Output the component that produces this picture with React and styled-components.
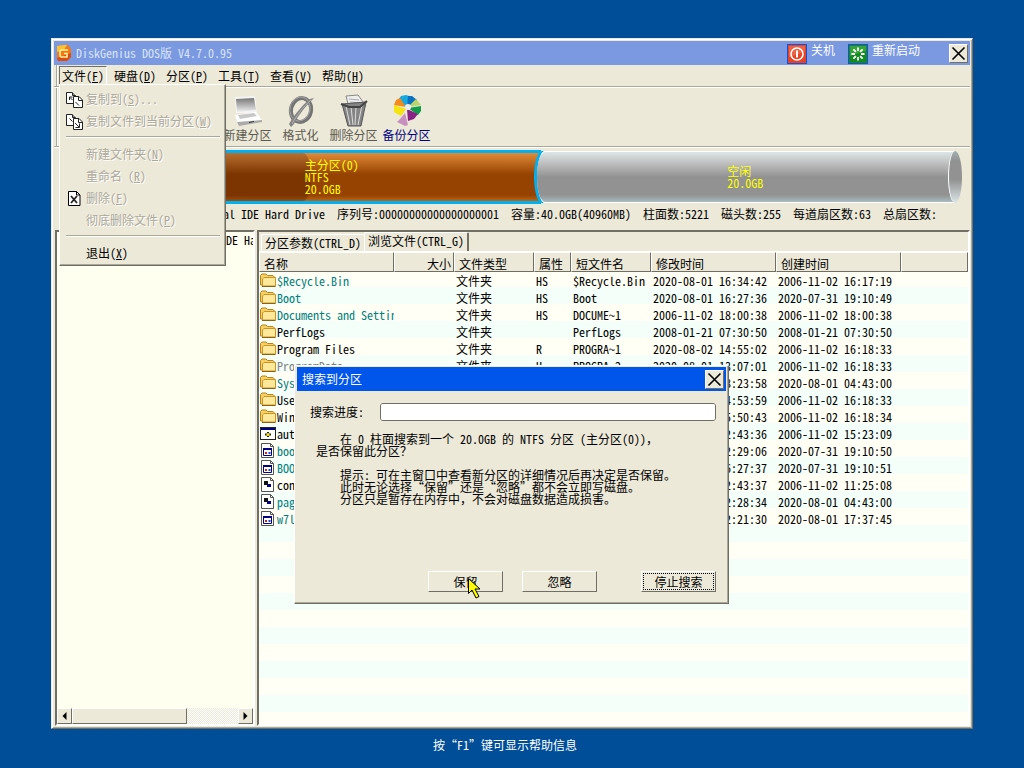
import { Fragment } from "react";
import styled, { createGlobalStyle, css } from "styled-components";

const GlobalStyle = createGlobalStyle`
  * {
    box-sizing: border-box;
  }

  body {
    margin: 0;
    background: #004e98;
    color: #000;
    font-family: "Noto Sans Mono CJK SC", "Noto Sans CJK SC", monospace;
    font-size: 12px;
    line-height: 16px;
  }

  button {
    margin: 0;
    padding: 0;
    border: 0;
    background: none;
    color: inherit;
    font: inherit;
    white-space: nowrap;
  }
`;

const raised = css`
  background: #ece9d8;
  border: 1px solid;
  border-color: #fff #716f64 #716f64 #fff;
`;

const sunken = css`
  border: 2px solid;
  border-color: #716f64 #fff #fff #716f64;
`;

const Desktop = styled.main`
  position: relative;
  display: flex;
  flex-direction: column;
  min-height: 100vh;
  padding: 38px 51px 0;
`;

const MainWindow = styled.section`
  display: flex;
  flex: 1;
  flex-direction: column;
  background: #ece9d8;
  border: 1px solid;
  border-color: #ece9d8 #716f64 #716f64 #ece9d8;
  box-shadow: inset 1px 1px #fff, inset -1px -1px #aca899;
  padding: 2px;
`;

const TitleBar = styled.header`
  display: flex;
  align-items: center;
  height: 24px;
  padding: 0 2px 0 2px;
  background: #7b99e1;
`;

const Title = styled.h1`
  flex: 1;
  margin: 0 0 0 4px;
  color: #d8e4f8;
  font-size: 12px;
  font-weight: normal;
`;

const PowerButton = styled.button`
  display: flex;
  gap: 4px;
  margin-right: 13px;
  color: #fff;

  & + & {
    margin-right: 29px;
  }

  svg {
    margin-top: 2px;
  }
`;

const CloseButton = styled.button`
  ${raised}
  display: flex;
  align-items: center;
  justify-content: center;
  width: 19px;
  height: 19px;
`;

const Band = styled.div`
  display: flex;
  height: ${(p) => p.$height}px;
  margin-left: 2px;
  border-left: 1px solid #aca899;
  box-shadow: inset 1px 0 #fff;
  padding-left: ${(p) => p.$indent}px;
`;

const Rule = styled.hr`
  width: 100%;
  margin: 0;
  border: 0;
  border-top: 1px solid #aca899;
  border-bottom: 1px solid #fff;
`;

const MenuSlot = styled.div`
  position: relative;
  width: 52px;
`;

const MenuButton = styled.button`
  width: 48px;
  height: 19px;
  margin-top: 1px;
  border: 1px solid transparent;
  ${(p) =>
    p.$open &&
    css`
      border-color: #716f64 #fff transparent #716f64;
    `}
`;

const Dropdown = styled.div`
  ${raised}
  position: absolute;
  z-index: 2;
  top: 19px;
  left: 0;
  width: 167px;
  padding: 3px 5px 1px 6px;
  box-shadow: inset -1px -1px #aca899;
`;

const DropItem = styled.button`
  display: flex;
  align-items: center;
  width: 100%;
  height: 22px;
  text-align: left;

  &:disabled {
    color: #aca899;
    text-shadow: 1px 1px #fff;
  }
`;

const IconCell = styled.span`
  display: flex;
  width: 20px;
`;

const DropRule = styled(Rule)`
  margin: 4px 0 5px;
`;

const ToolButton = styled.button`
  display: flex;
  flex-direction: column;
  align-items: center;
  width: 53px;
  padding-top: 4px;
  color: ${(p) => (p.$active ? "#000080" : "#5c5a50")};

  svg {
    margin-bottom: -1px;
  }
`;

const DiskMap = styled.div`
  position: relative;
  display: flex;
  margin: 2px 8px 0 66px;
  height: 54px;
`;

const Partition = styled.div`
  position: relative;
  display: flex;
  flex: 1;
  flex-direction: column;
  align-items: center;
  justify-content: center;
  color: #ff0;
  line-height: 12px;
`;

const UsedPartition = styled(Partition)`
  border: 3px solid #00b0f0;
  border-right: 0;
  background: linear-gradient(#e08a38, #964200 45%, #964200 88%, #b86818);
`;

const UsedSpace = styled.div`
  position: absolute;
  inset: 0 auto 0 0;
  width: 45%;
  border-radius: 0 8px 8px 0 / 0 24px 24px 0;
  background: linear-gradient(#b87030, #7c3400 45%, #7c3400 88%, #945010);
`;

const FreePartition = styled(Partition)`
  height: 52px;
  margin: 1px 8px 0 -4px;
  border: solid #fff;
  border-width: 1px 0;
  border-radius: 8px 0 0 8px / 26px 0 0 26px;
  box-shadow: -3px 0 #00b0f0;
  background: linear-gradient(#dce6e8, #c0c0c0 22%, #929292 50%, #929292 86%, #a8bcc0);
`;

const DiskCap = styled.div`
  position: absolute;
  top: 1px;
  right: 0;
  width: 14px;
  height: 52px;
  border-left: 1px solid #fff;
  border-radius: 50%;
  background: linear-gradient(#a0b0b0, #929292 20%, #929292 55%, #dce6e8);
`;

const PartitionText = styled.div`
  position: relative;
  white-space: pre;
`;

const DiskInfo = styled.div`
  display: flex;
  gap: 12px;
  height: 26px;
  padding: 2px 0 0 139px;
  overflow: hidden;
  white-space: nowrap;
`;

const Panels = styled.div`
  display: flex;
  flex: 1;
  gap: 3px;
  padding: 0 0 0 1px;
`;

const Tree = styled.aside`
  ${sunken}
  display: flex;
  flex: 0 0 200px;
  flex-direction: column;
  justify-content: space-between;
  overflow: hidden;
  background: #fffff0;
`;

const TreeRoot = styled.div`
  padding-left: 91px;
  overflow: hidden;
  white-space: nowrap;
`;

const Scrollbar = styled.div`
  display: flex;
  height: 16px;
  background: repeating-conic-gradient(#fff 0 25%, #ece9d8 0 50%) 0 0 / 2px 2px;
`;

const ScrollButton = styled.button`
  ${raised}
  display: flex;
  flex: 0 0 15px;
  align-items: center;
  justify-content: center;
`;

const Thumb = styled.div`
  ${raised}
  width: 115px;
  margin-right: auto;
`;

const Browser = styled.section`
  ${sunken}
  display: flex;
  flex: 1;
  flex-direction: column;
  min-width: 0;
  margin-left: -1px;
  background: #ece9d8;
`;

const Tabs = styled.div`
  display: flex;
  align-items: flex-end;
  height: 20px;
  padding-left: 2px;
  border-bottom: 1px solid #fff;
`;

const Tab = styled.button`
  height: ${(p) => (p.$active ? 19 : 17)}px;
  padding: 0 3px;
  border: solid;
  border-width: 1px 0 0 1px;
  border-color: #fff;
  border-radius: 2px 2px 0 0;
  ${(p) =>
    p.$active &&
    css`
      padding-bottom: 2px;
      border-right: 2px solid #716f64;
    `}
`;

const FileArea = styled.div`
  flex: 1;
  background: repeating-linear-gradient(
    #fffff5 0 17px,
    #f3fff8 17px 34px
  ) 0 18px;
`;

const FileTable = styled.table`
  width: 100%;
  border-collapse: separate;
  border-spacing: 0;
  table-layout: fixed;

  th {
    ${raised}
    height: 20px;
    padding: 2px 4px 0;
    font-weight: normal;
    line-height: 15px;
    text-align: left;
  }

  td {
    height: 17px;
    padding: 0 0 0 2px;
    overflow: hidden;
    line-height: 17px;
    white-space: nowrap;
  }
`;

const SizeHead = styled.th`
  && {
    padding-right: 2px;
    text-align: right;
  }
`;

const FileName = styled.div`
  display: flex;
  height: 17px;
  align-items: center;
  color: ${(p) => p.$color};

  svg {
    flex: none;
    margin: 0 1px 0 -1px;
  }
`;

const Dialog = styled.section`
  ${raised}
  position: absolute;
  z-index: 3;
  top: 365px;
  left: 294px;
  width: 435px;
  height: 239px;
  padding: 1px 2px 2px;
  box-shadow: inset -1px -1px #aca899;
`;

const DialogTitle = styled.header`
  display: flex;
  align-items: center;
  justify-content: space-between;
  height: 24px;
  padding: 0 2px 0 5px;
  background: #0055ea;
  color: #fff;
`;

const DialogBody = styled.div`
  padding: 12px 10px 0 13px;
`;

const ProgressLine = styled.label`
  display: flex;
  align-items: center;
  gap: 16px;
`;

const Progress = styled.progress`
  appearance: none;
  flex: 1;
  height: 18px;
  border: 1px solid #716f64;
  border-radius: 3px;
  background: #fff;
  overflow: hidden;

  &::-webkit-progress-bar {
    background: #fff;
  }

  &::-webkit-progress-value {
    background: #316ac5;
  }
`;

const Message = styled.div`
  height: 150px;
  padding: 12px 0 0 6px;
  line-height: 12px;
  white-space: pre;
`;

const DialogButtons = styled.div`
  display: flex;
  justify-content: flex-end;
  gap: 19px;
`;

const DialogButton = styled.button`
  ${raised}
  width: 75px;
  height: 21px;
  line-height: 17px;

  &:last-child {
    margin-left: 25px;
    outline: 1px dotted #000;
    outline-offset: -3px;
  }
`;

const Hint = styled.footer`
  height: 39px;
  padding: 8px 14px 0 0;
  text-align: center;
  color: #fff;
`;

const Pointer = styled.svg`
  position: absolute;
  z-index: 4;
  top: 577px;
  left: 467px;
`;

const CloseIcon = () => (
  <svg width="15" height="15" viewBox="0 0 15 15">
    <path d="M1.5 1.5l12 12M13.5 1.5l-12 12" stroke="#000" strokeWidth="1.6" />
  </svg>
);

const AppIcon = () => (
  <svg width="16" height="18" viewBox="0 0 16 18">
    <path d="M1 2L8 1h4l3 4v8l-4 4H2l-1-3z" fill="#f47a12" />
    <path d="M1 2L8 1h3L8 6 1 8z" fill="#ffc02c" />
    <path d="M1 14l1 3h9l4-4V9z" fill="#dc4b10" />
    <path d="M12 6H5L4 7v5l1 1h6V9.500H8" fill="none" stroke="#fff3a0" strokeWidth="1.600" />
  </svg>
);

const ShutdownIcon = () => (
  <svg width="20" height="20" viewBox="0 0 20 20">
    <rect x=".5" y=".5" width="19" height="19" fill="#e84224" stroke="#1450d8" />
    <path d="M2 2h16v6L2 13z" fill="#f0765c" opacity=".6" />
    <circle cx="10" cy="10" r="6" fill="none" stroke="#fff" strokeWidth="1.600" />
    <path d="M10 6.500v7" stroke="#fff" strokeWidth="2" />
  </svg>
);

const RestartIcon = () => (
  <svg width="20" height="20" viewBox="0 0 20 20">
    <rect x=".5" y=".5" width="19" height="19" fill="#128a20" stroke="#1450d8" />
    <path d="M2 2h16v5L2 12z" fill="#4cb44c" opacity=".6" />
    <path
      d="M10 3.500v3.500M10 13v3.500M3.500 10H7M13 10h3.500M5.400 5.400l2.500 2.500M12.100 12.100l2.500 2.500M5.400 14.600l2.500-2.500M12.100 7.900l2.500-2.500"
      stroke="#fff"
      strokeWidth="1.800"
    />
  </svg>
);

const CopyIcon = ({ into }) => (
  <svg width="17" height="17" viewBox="0 0 17 17">
    <path d="M.5 1.500H6L9.500 5v7.500h-9z" fill="#fff" stroke="#222" />
    <path d="M6.500 1.500v3h3" fill="none" stroke="#222" />
    <path d="M7.500 5.500H13L16.500 9v7.500h-9z" fill="#fff" stroke="#222" />
    <path d="M12.500 5.500v4h4" fill="none" stroke="#222" />
    {into ? (
      <path d="M3.500 5.500l3 3M9 10l4 4M13.500 10.500v4h-4" fill="none" stroke="#222" />
    ) : (
      <path d="M3.500 9V6h3M4 6.500l2.500 2.500M9.500 11l3.500 3.500" fill="none" stroke="#222" />
    )}
  </svg>
);

const DeleteIcon = () => (
  <svg width="17" height="17" viewBox="0 0 17 17">
    <path d="M2.500 1.500h8l3.500 3.500v10.500H2.500z" fill="#fff" stroke="#000" />
    <path d="M10.500 1.500V5H14" fill="none" stroke="#000" />
    <path d="M5 6l6 7M11 6l-6 7" stroke="#222" strokeWidth="1.800" />
  </svg>
);

const LaptopIcon = () => (
  <svg width="34" height="36" viewBox="0 0 34 36">
    <defs>
      <linearGradient id="screen" x2="0" y2="1">
        <stop offset="0" stopColor="#777" />
        <stop offset="1" stopColor="#eee" />
      </linearGradient>
    </defs>
    <path d="M4 5l20-1 2 17H5z" fill="#f4f4f4" />
    <path d="M5 7l18-1 2 12-19 2z" fill="url(#screen)" />
    <path d="M4 23l21-3 6 8-24 4z" fill="#fff" />
    <path d="M7 23l16-2 3 3-17 3z" fill="#c8c8c8" />
    <path d="M6 30l25-2v2L8 34z" fill="#aaa" />
    <path d="M18 30l5-1v1l-5 1z" fill="#333" />
  </svg>
);

const FormatIcon = () => (
  <svg width="34" height="36" viewBox="0 0 34 36">
    <ellipse cx="17" cy="18" rx="10" ry="12" fill="none" stroke="#757575" strokeWidth="4" transform="rotate(14 17 18)" />
    <ellipse cx="16" cy="17" rx="10" ry="12" fill="none" stroke="#a4a4a4" transform="rotate(14 16 17)" />
    <path d="M30 6l-4 1C18 13 9 25 5 32l2 3 3-3C13 25 21 15 27 9z" fill="#828282" />
    <path d="M27 8C19 15 12 24 8 32" fill="none" stroke="#b4b4b4" />
  </svg>
);

const TrashIcon = () => (
  <svg width="34" height="36" viewBox="0 0 34 36">
    <path d="M9 4l12-1 8 11-16 5z" fill="#eee" stroke="#888" />
    <path d="M12 7l10 1M13 10l12 1" stroke="#aaa" />
    <path d="M5 12l24-2-5 24H11z" fill="#858585" stroke="#555" />
    <path d="M9 14l4 19M14 15l2 18M19 15l-1 18M25 13l-4 20" stroke="#ddd" />
    <path d="M4 12l8 3h11l7-6" fill="none" stroke="#444" strokeWidth="2" />
  </svg>
);

const WheelIcon = () => (
  <svg width="34" height="36" viewBox="0 0 34 36">
    <path d="M17 16L8 8l3-4 5-1 3 1z" fill="#18a8e0" />
    <path d="M17 16l1-12h4l5 4z" fill="#0c70c0" />
    <path d="M18 15l8-8 5 6z" fill="#b8d46c" />
    <path d="M18 16l13-2v5l-3 4z" fill="#109c48" />
    <path d="M17 17l11 5-4 5-6 2z" fill="#8a2484" />
    <path d="M15 21l-5 6-3 3 8 4 3-1z" fill="#c890c0" />
    <path d="M16 17l-5 7-7-4v-7z" fill="#f4e410" />
    <path d="M16 15L4 13l2-5 4-2z" fill="#f48a1c" />
    <circle cx="18" cy="15" r="3" fill="#eee" />
  </svg>
);

const FolderIcon = () => (
  <svg width="16" height="15" viewBox="0 0 16 15">
    <path d="M.5 12V2.500L2 1h4l1.500 1.500H13L14.500 4v8z" fill="#f8d060" stroke="#b8841c" />
    <path d="M2.500 13V6L4 4.500h11.500V13z" fill="#fde89c" stroke="#c8942c" />
    <path d="M2 13.500h13.500" stroke="#8c6410" />
  </svg>
);

const FileIcon = ({ kind }) => {
  if (kind === "folder") {
    return <FolderIcon />;
  }
  if (kind === "batch") {
    return (
      <svg width="16" height="15" viewBox="0 0 16 15">
        <rect x=".5" y="1.500" width="15" height="12" fill="#fff" stroke="#222" />
        <path d="M1 3h14" stroke="#000080" strokeWidth="2" />
        <path d="M8 6v5M5 8.500h6" stroke="#222" strokeWidth="2" />
        <circle cx="8" cy="8.500" r="1.500" fill="#ffe800" />
      </svg>
    );
  }
  return (
    <svg width="16" height="15" viewBox="0 0 16 15">
      <path d="M1.500 .5h9L13.500 3.500v11h-12z" fill="#fff" stroke="#555" />
      <path d="M10.500 .5v3h3" fill="none" stroke="#555" />
      {kind === "data" ? (
        <>
          <path d="M3.500 5.500h8v7h-8z" fill="#fff" stroke="#000080" />
          <path d="M3 6h9" stroke="#000080" strokeWidth="2" />
          <path d="M5 10h2" stroke="#d02020" strokeWidth="2" />
          <path d="M8.500 10h2" stroke="#2040d0" strokeWidth="2" />
        </>
      ) : (
        <>
          <path d="M4 4h4v4H4z" fill="#111" />
          <path d="M7 7h4v3H7z" fill="#000080" />
        </>
      )}
    </svg>
  );
};

const menus = [
  ["文件", "F"],
  ["硬盘", "D"],
  ["分区", "P"],
  ["工具", "T"],
  ["查看", "V"],
  ["帮助", "H"],
];

const fileMenu = [
  { label: "复制到", hotkey: "S", tail: "...", icon: <CopyIcon />, disabled: true },
  { label: "复制文件到当前分区", hotkey: "W", icon: <CopyIcon into />, disabled: true, ruled: true },
  { label: "新建文件夹", hotkey: "N", disabled: true },
  { label: "重命名 ", hotkey: "R", disabled: true },
  { label: "删除", hotkey: "F", icon: <DeleteIcon />, disabled: true },
  { label: "彻底删除文件", hotkey: "P", disabled: true, ruled: true },
  { label: "退出", hotkey: "X" },
];

const tools = [
  { label: "新建分区", Icon: LaptopIcon },
  { label: "格式化", Icon: FormatIcon },
  { label: "删除分区", Icon: TrashIcon },
  { label: "备份分区", Icon: WheelIcon, active: true },
];

const diskInfo = [
  "Virtual IDE Hard Drive",
  "序列号:00000000000000000001",
  "容量:40.0GB(40960MB)",
  "柱面数:5221",
  "磁头数:255",
  "每道扇区数:63",
  "总扇区数:",
];

const TEAL = "#008080";
const GRAY = "#808080";
const BLACK = "#000";

const files = [
  ["folder", TEAL, "$Recycle.Bin", "HS", "$Recycle.Bin", "2020-08-01 16:34:42", "2006-11-02 16:17:19"],
  ["folder", TEAL, "Boot", "HS", "Boot", "2020-08-01 16:27:36", "2020-07-31 19:10:49"],
  ["folder", TEAL, "Documents and Settings", "HS", "DOCUME~1", "2006-11-02 18:00:38", "2006-11-02 18:00:38"],
  ["folder", BLACK, "PerfLogs", "", "PerfLogs", "2008-01-21 07:30:50", "2008-01-21 07:30:50"],
  ["folder", BLACK, "Program Files", "R", "PROGRA~1", "2020-08-02 14:55:02", "2006-11-02 16:18:33"],
  ["folder", GRAY, "ProgramData", "H", "PROGRA~2", "2020-08-01 13:07:01", "2006-11-02 16:18:33"],
  ["folder", TEAL, "System Volume Information", "HS", "SYSTEM~1", "2020-08-01 18:23:58", "2020-08-01 04:43:00"],
  ["folder", BLACK, "Users", "R", "Users", "2020-08-01 14:53:59", "2006-11-02 16:18:33"],
  ["folder", BLACK, "Windows", "", "Windows", "2020-08-01 15:50:43", "2006-11-02 16:18:34"],
  ["batch", BLACK, "autoexec.bat", "A", "autoexec.bat", "2006-09-19 02:43:36", "2006-11-02 15:23:09"],
  ["data", TEAL, "bootmgr", "RHSA", "bootmgr", "2009-04-11 12:29:06", "2020-07-31 19:10:50"],
  ["data", TEAL, "BOOTSECT.BAK", "RHSA", "BOOTSECT.BAK", "2020-08-01 16:27:37", "2020-07-31 19:10:51"],
  ["system", BLACK, "config.sys", "A", "config.sys", "2006-09-19 02:43:37", "2006-11-02 11:25:08"],
  ["system", TEAL, "pagefile.sys", "HSA", "pagefile.sys", "2020-08-02 12:28:34", "2020-08-01 04:43:00"],
  ["data", TEAL, "w7ldr", "RHSA", "w7ldr", "2020-08-01 12:21:30", "2020-08-01 17:37:45"],
];

const columnWidths = [135, 60, 80, 37, 80, 125, 125];

const message = `    在 0 柱面搜索到一个 20.0GB 的 NTFS 分区 (主分区(0))，
是否保留此分区？

    提示: 可在主窗口中查看新分区的详细情况后再决定是否保留。
    此时无论选择“保留”还是“忽略”都不会立即写磁盘。
    分区只是暂存在内存中，不会对磁盘数据造成损害。`;

const Label = ({ text, hotkey, tail }) => (
  <span>
    {text}(<u>{hotkey}</u>){tail}
  </span>
);

const FileMenu = () => (
  <Dropdown role="menu">
    {fileMenu.map((item) => (
      <Fragment key={item.label}>
        <DropItem role="menuitem" disabled={item.disabled}>
          <IconCell>{item.icon}</IconCell>
          <Label text={item.label} hotkey={item.hotkey} tail={item.tail} />
        </DropItem>
        {item.ruled && <DropRule />}
      </Fragment>
    ))}
  </Dropdown>
);

const FileList = () => (
  <FileArea>
    <FileTable>
      <colgroup>
        {columnWidths.map((width, i) => (
          <col key={i} width={width} />
        ))}
        <col />
      </colgroup>
      <thead>
        <tr>
          <th>名称</th>
          <SizeHead>大小</SizeHead>
          <th>文件类型</th>
          <th>属性</th>
          <th>短文件名</th>
          <th>修改时间</th>
          <th>创建时间</th>
          <th />
        </tr>
      </thead>
      <tbody>
        {files.map(([kind, color, name, attr, short, modified, created]) => (
          <tr key={name}>
            <td>
              <FileName $color={color}>
                <FileIcon kind={kind} />
                {name}
              </FileName>
            </td>
            <td />
            <td>{kind === "folder" ? "文件夹" : ""}</td>
            <td>{attr}</td>
            <td>{short}</td>
            <td>{modified}</td>
            <td>{created}</td>
            <td />
          </tr>
        ))}
      </tbody>
    </FileTable>
  </FileArea>
);

const SearchDialog = () => (
  <Dialog role="dialog" aria-labelledby="search-title">
    <DialogTitle>
      <span id="search-title">搜索到分区</span>
      <CloseButton aria-label="关闭">
        <CloseIcon />
      </CloseButton>
    </DialogTitle>
    <DialogBody>
      <ProgressLine>
        搜索进度:
        <Progress value={0} max={100} />
      </ProgressLine>
      <Message>{message}</Message>
      <DialogButtons>
        <DialogButton>保留</DialogButton>
        <DialogButton>忽略</DialogButton>
        <DialogButton>停止搜索</DialogButton>
      </DialogButtons>
    </DialogBody>
  </Dialog>
);

const App = () => (
  <Desktop>
    <GlobalStyle />
    <MainWindow>
      <TitleBar>
        <AppIcon />
        <Title>DiskGenius DOS版 V4.7.0.95</Title>
        <PowerButton>
          <ShutdownIcon />
          关机
        </PowerButton>
        <PowerButton>
          <RestartIcon />
          重新启动
        </PowerButton>
        <CloseButton aria-label="关闭">
          <CloseIcon />
        </CloseButton>
      </TitleBar>
      <Band as="nav" $height={21} $indent={2}>
        {menus.map(([text, hotkey], i) => (
          <MenuSlot key={text}>
            <MenuButton $open={i === 0}>
              <Label text={text} hotkey={hotkey} />
            </MenuButton>
            {i === 0 && <FileMenu />}
          </MenuSlot>
        ))}
      </Band>
      <Rule />
      <Band $height={58} $indent={164}>
        {tools.map(({ label, Icon, active }) => (
          <ToolButton key={label} $active={active}>
            <Icon />
            {label}
          </ToolButton>
        ))}
      </Band>
      <Rule />
      <DiskMap>
        <UsedPartition>
          <UsedSpace />
          <PartitionText>{"主分区(0)\nNTFS\n20.0GB"}</PartitionText>
        </UsedPartition>
        <FreePartition>
          <PartitionText>{"空闲\n20.0GB"}</PartitionText>
        </FreePartition>
        <DiskCap />
      </DiskMap>
      <DiskInfo>
        {diskInfo.map((text) => (
          <span key={text}>{text}</span>
        ))}
      </DiskInfo>
      <Panels>
        <Tree>
          <TreeRoot>HD0:Virtual IDE Hard Drive</TreeRoot>
          <Scrollbar>
            <ScrollButton aria-label="向左">
              <svg width="5" height="8" viewBox="0 0 5 8">
                <path d="M4.500 0v8L.5 4z" />
              </svg>
            </ScrollButton>
            <Thumb />
            <ScrollButton aria-label="向右">
              <svg width="5" height="8" viewBox="0 0 5 8">
                <path d="M.5 0v8l4-4z" />
              </svg>
            </ScrollButton>
          </Scrollbar>
        </Tree>
        <Browser>
          <Tabs role="tablist">
            <Tab role="tab">分区参数(CTRL_D)</Tab>
            <Tab role="tab" $active>
              浏览文件(CTRL_G)
            </Tab>
          </Tabs>
          <FileList />
        </Browser>
      </Panels>
    </MainWindow>
    <Hint>按“F1”键可显示帮助信息</Hint>
    <SearchDialog />
    <Pointer width="14" height="22" viewBox="0 0 14 22">
      <path d="M1.500 1.500v15l3.500-3.500 4 8 3-1.500-4-7.500h5z" fill="#ff0" stroke="#000" />
    </Pointer>
  </Desktop>
);

export default App;
